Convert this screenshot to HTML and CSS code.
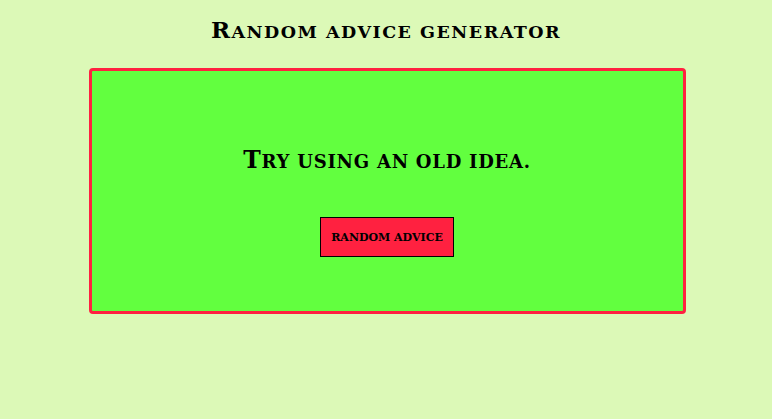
FILE: index.html
```html
<!DOCTYPE html>
<html lang="en">
<head>
<meta charset="utf-8">
<title>Random advice generator</title>
<link rel="stylesheet" href="styles.css">
</head>
<body>
<main class="page">
  <h1 class="title">Random advice generator</h1>
  <section class="card">
    <p class="advice">Try using an old idea.</p>
    <button class="btn" type="button">random advice</button>
  </section>
</main>
</body>
</html>
```
FILE: styles.css
```css
html, body {
  margin: 0;
  padding: 0;
  background: #dcf9b7;
  height: 100%;
}
body {
  font-family: "DejaVu Serif", "Liberation Serif", serif;
  color: #000;
}
.page {
  display: flex;
  flex-direction: column;
  align-items: center;
  padding-top: 16px;
}
.title {
  margin: 0;
  height: 28px;
  font-size: 17.5px;
  line-height: 28px;
  font-weight: bold;
  text-transform: uppercase;
  letter-spacing: 1.5px;
}
.title::first-letter {
  font-size: 23px;
}
.card {
  box-sizing: border-box;
  width: 597px;
  height: 246px;
  margin-top: 24px;
  margin-left: 2px;
  background: #62ff3f;
  border: 3px solid #ff2140;
  border-radius: 4px;
  display: flex;
  flex-direction: column;
  align-items: center;
  padding-top: 74px;
}
.advice {
  margin: 0;
  height: 30px;
  font-size: 18px;
  line-height: 30px;
  font-weight: bold;
  text-transform: uppercase;
  letter-spacing: 0.75px;
}
.advice::first-letter {
  font-size: 23.5px;
}
.btn {
  margin-top: 42px;
  width: 134px;
  height: 40px;
  background: #ff2140;
  border: 1px solid #000;
  border-radius: 0;
  font-family: "DejaVu Serif", "Liberation Serif", serif;
  font-size: 11px;
  font-weight: bold;
  text-transform: uppercase;
  letter-spacing: 0;
  color: #000;
  padding: 0;
}
```
